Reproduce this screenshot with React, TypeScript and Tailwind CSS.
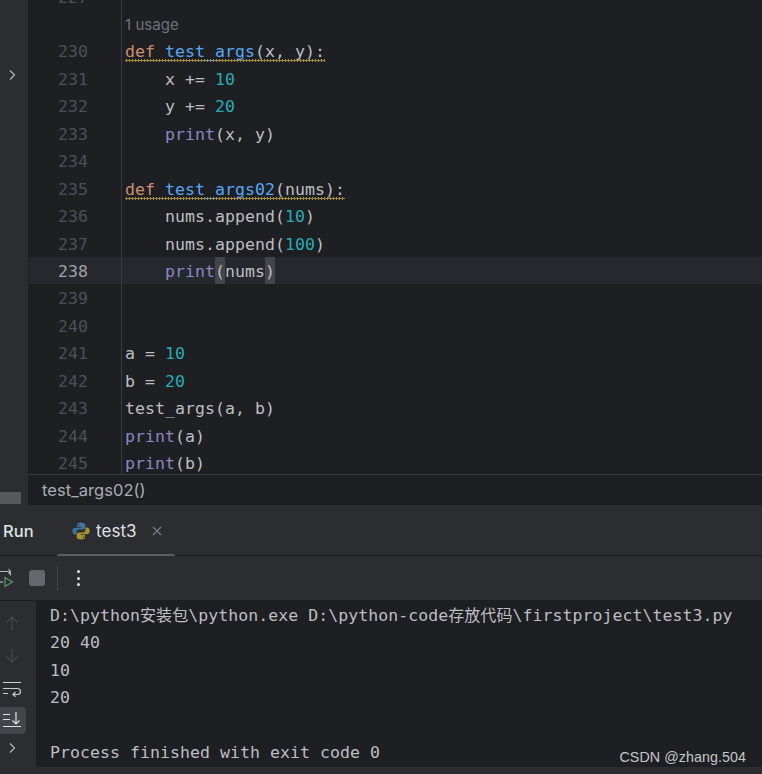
import React from "react";

const C = ({ c, children }: { c: string; children: React.ReactNode }) => <span className={c}>{children}</span>;
const kw = "text-[#cf8e6d]";
const fn = "text-[#56a8f5]";
const num = "text-[#2aacb8]";
const bi = "text-[#8888c6]";

function Row({ n, children, current, usage }: { n?: number; children?: React.ReactNode; current?: boolean; usage?: boolean }) {
  return (
    <div className={`flex h-[27.46px] leading-[30.5px] ${current ? "bg-[#26282e]" : ""}`}>
      <div className={`w-[59px] shrink-0 text-right ${current ? "text-[#a1a3ab]" : "text-[#4b5059]"} text-[16.55px]`}>{n}</div>
      <div className="w-[34px] shrink-0 border-r border-[#393b40]" />
      <div className="pl-[3px] whitespace-pre">
        {usage ? <span className="font-['Inter',sans-serif] text-[15px] text-[#6f737a]">1 usage</span> : children}
      </div>
    </div>
  );
}

const wavy = "inline-block h-[27px] leading-[30.5px] bg-[radial-gradient(circle,#a08a42_1px,transparent_1.2px)] bg-[length:3px_3px] bg-repeat-x bg-[position:0_22px]";

function Python() {
  return (
    <svg width="18" height="18" viewBox="0 0 18 18">
      <path d="M8.800 0.500C5.500 0.500 5 1.900 5 3v2h4.200v.700H3C1.400 5.700 0.300 7 .300 9s1.100 3.400 2.500 3.400H4.500v-2.100c0-1.500 1.200-2.700 2.800-2.700h3.800c1.200 0 2.200-1 2.200-2.300V3c0-1.300-1.200-2.500-4.500-2.500z" fill="#3f739c" />
      <circle cx="6.600" cy="2.700" r=".8" fill="#2b2d30" />
      <path d="M9.200 17.500c3.300 0 3.800-1.400 3.800-2.500v-2H8.800v-.7H15c1.600 0 2.700-1.300 2.700-3.300s-1.100-3.400-2.500-3.400h-1.700v2.100c0 1.500-1.200 2.700-2.800 2.700H6.900c-1.200 0-2.200 1-2.200 2.300V15c0 1.300 1.200 2.500 4.500 2.500z" fill="#a89230" />
      <circle cx="11.400" cy="15.300" r=".8" fill="#2b2d30" />
    </svg>
  );
}

function Chevron() {
  return (
    <svg width="16" height="16" viewBox="0 0 16 16" fill="none" stroke="#b4b8bf" strokeWidth="1.2">
      <path d="M6 3.500 10.500 8 6 12.500" />
    </svg>
  );
}

export default function App() {
  return (
    <div className="w-[762px] h-[774px] overflow-hidden flex flex-col bg-[#1e1f22] font-['DejaVu_Sans_Mono','Noto_Sans_CJK_SC',monospace] text-[16.55px] tracking-[0.05px] text-[#bcbec4]">
      <div className="flex h-[505px] shrink-0">
        <div className="w-[28px] shrink-0 bg-[#2b2d30] flex flex-col justify-between">
          <div className="pt-[67px] pl-[4px]">
            <Chevron />
          </div>
          <div className="w-[21px] h-[12px] mb-[1px] bg-[#56585c]" />
        </div>
        <div className="w-px shrink-0 bg-[#1e1f22]" />
        <div className="flex-1 flex flex-col min-w-0">
          <div className="h-[475px] overflow-hidden border-b border-[#393b40]">
            <div className="-mt-[17.500px]">
              <Row n={227} />
              <Row usage />
              <Row n={230}><span className={wavy}><C c={kw}>def</C> <C c={fn}>test_args</C>(x, y):</span></Row>
              <Row n={231}>{"    x += "}<C c={num}>10</C></Row>
              <Row n={232}>{"    y += "}<C c={num}>20</C></Row>
              <Row n={233}>{"    "}<C c={bi}>print</C>(x, y)</Row>
              <Row n={234} />
              <Row n={235}><span className={wavy}><C c={kw}>def</C> <C c={fn}>test_args02</C>(nums):</span></Row>
              <Row n={236}>{"    nums.append("}<C c={num}>10</C>)</Row>
              <Row n={237}>{"    nums.append("}<C c={num}>100</C>)</Row>
              <Row n={238} current>{"    "}<C c={bi}>print</C><span className="bg-[#43454a] inline-block h-[27px] align-top">(</span>nums<span className="bg-[#43454a] inline-block h-[27px] align-top">)</span></Row>
              <Row n={239} />
              <Row n={240} />
              <Row n={241}>a = <C c={num}>10</C></Row>
              <Row n={242}>b = <C c={num}>20</C></Row>
              <Row n={243}>test_args(a, b)</Row>
              <Row n={244}><C c={bi}>print</C>(a)</Row>
              <Row n={245}><C c={bi}>print</C>(b)</Row>
            </div>
          </div>
          <div className="flex-1 flex items-center pl-[13px] font-['Inter',sans-serif] text-[16.500px] text-[#a8adb5]">test_args02()</div>
        </div>
      </div>

      <div className="h-[51px] shrink-0 bg-[#2b2d30] border-b border-[#1e1f22] flex items-start relative">
        <div className="pl-[3px] pt-[16px] w-[57px] font-['Inter',sans-serif] text-[16.500px] font-medium text-[#dfe1e5] leading-[20px]">Run</div>
        <div className="w-[118px] h-[51px] relative flex items-start pl-[15px] pt-[17px] gap-[6px]">
          <Python />
          <span className="font-['Inter',sans-serif] text-[17px] text-[#dfe1e5] leading-[18px]">test3</span>
          <svg className="ml-[8px] mt-[3px]" width="12" height="12" viewBox="0 0 12 12" stroke="#7a7e85" strokeWidth="1.200">
            <path d="M2 2 10 10M10 2 2 10" />
          </svg>
          <div className="absolute left-0 right-0 bottom-[-2px] h-[4px] rounded-[2px] bg-[#5a5d63]" />
        </div>
      </div>

      <div className="h-[44px] shrink-0 bg-[#2b2d30] flex items-center relative overflow-hidden">
        <svg className="shrink-0" width="15" height="22" viewBox="0 0 15 22" fill="none">
          <path d="M0 4.500h8c1.500 0 2.500 1 2.500 2.500v1.500M8.500 2l2 2.500-2 2" stroke="#b4b8bf" strokeWidth="1.200" />
          <path d="M0 15h3" stroke="#b4b8bf" strokeWidth="1.200" />
          <path d="M5 10.700v8.600l7.500-4.300z" stroke="#57965c" strokeWidth="1.300" />
        </svg>
        <div className="ml-[14px] w-[16px] h-[16px] rounded-[3px] bg-[#65676c]" />
        <div className="ml-[12px] w-px h-[25px] bg-[#43454a]" />
        <div className="ml-[19px] flex flex-col gap-[3.500px]">
          <div className="w-[3px] h-[3px] rounded-full bg-[#dfe1e5]" />
          <div className="w-[3px] h-[3px] rounded-full bg-[#dfe1e5]" />
          <div className="w-[3px] h-[3px] rounded-full bg-[#dfe1e5]" />
        </div>
      </div>

      <div className="flex h-[167px] shrink-0 border-t border-[#1e1f22]">
        <div className="w-[36px] shrink-0 bg-[#2b2d30] flex flex-col items-start">
          <svg className="ml-[4px] mt-[14px]" width="16" height="16" viewBox="0 0 16 16" fill="none" stroke="#45474c" strokeWidth="1.300">
            <path d="M8 2v13M2.500 7.500 8 2l5.500 5.500" />
          </svg>
          <svg className="ml-[4px] mt-[17px]" width="16" height="16" viewBox="0 0 16 16" fill="none" stroke="#45474c" strokeWidth="1.300">
            <path d="M8 1v13M2.500 8.500 8 14l5.500-5.500" />
          </svg>
          <svg className="ml-[3px] mt-[17px]" width="18" height="16" viewBox="0 0 18 16" fill="none" stroke="#c9ccd2" strokeWidth="1.200">
            <path d="M0 1.500h18M0 7.500h14.500a2.800 2.800 0 0 1 0 6H10M12.500 11 10 13.500l2.500 2.200M0 12.500h5" />
          </svg>
          <div className="mt-[10px] w-[26px] h-[27px] rounded-r-[4px] bg-[#43454a] flex items-start pl-[3px] pt-[5px]">
            <svg width="18" height="16" viewBox="0 0 18 16" fill="none" stroke="#dfe1e5" strokeWidth="1.200">
              <path d="M0 2.500h7M0 7.500h7M0 14.500h18M13 0v12M9.500 8.500 13 12l3.500-3.500" />
            </svg>
          </div>
          <div className="ml-[4px] mt-[6px]">
            <Chevron />
          </div>
        </div>
        <div className="pl-[14px] pt-[1px] leading-[27.4px] whitespace-pre relative flex-1">
          <div>D:\python<span className="text-[16px]">安装包</span>\python.exe D:\python-code<span className="text-[16px]">存放代码</span>\firstproject\test3.py</div>
          <div>20 40</div>
          <div>10</div>
          <div>20</div>
          <div>&nbsp;</div>
          <div>Process finished with exit code 0</div>
          <div className="absolute right-[16px] bottom-[0px] font-['Liberation_Sans',sans-serif] text-[14.300px] text-[#c4c6ca] leading-[20px]">CSDN @zhang.504</div>
        </div>
      </div>

      <div className="flex-1 bg-[#2b2d30]" />
    </div>
  );
}
